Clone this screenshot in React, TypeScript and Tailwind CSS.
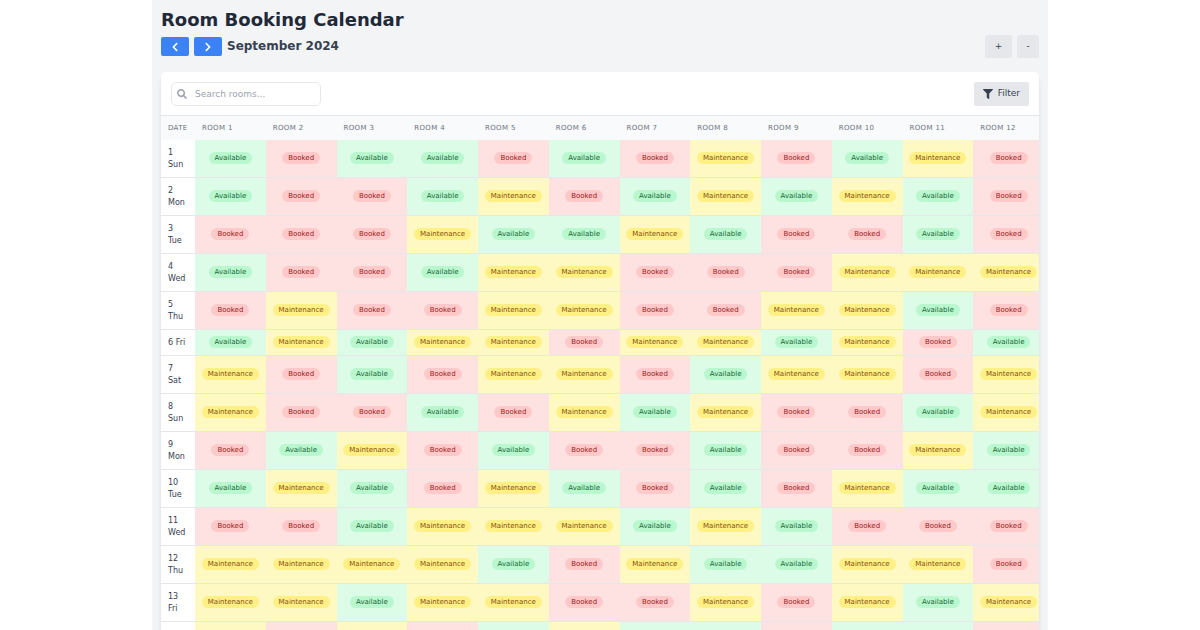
import { FaChevronLeft, FaChevronRight, FaFilter, FaSearch } from "react-icons/fa";
import clsx from "clsx";

type Status = "Available" | "Booked" | "Maintenance";

const STATUS: Record<string, Status> = { A: "Available", B: "Booked", M: "Maintenance" };

const cellStyles: Record<Status, string> = {
  Available: "bg-[#dcfce7]",
  Booked: "bg-[#fee2e2]",
  Maintenance: "bg-[#fef9c3]",
};

const badgeStyles: Record<Status, string> = {
  Available: "bg-green-200 text-[#166534]",
  Booked: "bg-red-200 text-[#991b1b]",
  Maintenance: "bg-yellow-200 text-[#854d0e]",
};

const rooms = Array.from({ length: 12 }, (_, i) => `Room ${i + 1}`);

// one letter per room, in room order
const days = [
  { date: "1 Sun", slots: "ABAABABMBAMB" },
  { date: "2 Mon", slots: "ABBAMBAMAMAB" },
  { date: "3 Tue", slots: "BBBMAAMABBAB" },
  { date: "4 Wed", slots: "ABBAMMBBBMMM" },
  { date: "5 Thu", slots: "BMBBMMBBMMAB" },
  { date: "6 Fri", slots: "AMAMMBMMAMBA" },
  { date: "7 Sat", slots: "MBABMMBAMMBM" },
  { date: "8 Sun", slots: "MBBABMAMBBAM" },
  { date: "9 Mon", slots: "BAMBABBABBMA" },
  { date: "10 Tue", slots: "AMABMABABMAA" },
  { date: "11 Wed", slots: "BBAMMMAMABBB" },
  { date: "12 Thu", slots: "MMMMABMAAMMB" },
  { date: "13 Fri", slots: "MMAMMBBMBMAM" },
  { date: "14 Sat", slots: "MBMBAMAABAAB" },
];

function StatusCell({ status }: { status: Status }) {
  return (
    <td className={clsx("text-center align-middle text-[7px] leading-3 whitespace-nowrap", cellStyles[status])}>
      <span className={clsx("inline-block rounded-full px-1.5 align-top", badgeStyles[status])}>{status}</span>
    </td>
  );
}

function Header() {
  return (
    <header className="mb-3.5">
      <h1 className="text-[18px] leading-[21px] font-bold text-[#1f2937]">Room Booking Calendar</h1>
      <div className="mt-[5px] flex items-center justify-between">
        <div className="flex items-center gap-[5px]">
          <button type="button" aria-label="Previous month" className="flex h-[19px] w-7 items-center justify-center rounded-xs bg-[#3b82f6] text-white">
            <FaChevronLeft size={10} />
          </button>
          <button type="button" aria-label="Next month" className="flex h-[19px] w-7 items-center justify-center rounded-xs bg-[#3b82f6] text-white">
            <FaChevronRight size={10} />
          </button>
          <h2 className="pb-0.5 text-[12px] leading-4 font-semibold text-[#374151]">September 2024</h2>
        </div>
        <div className="flex gap-[5px] text-[9px] text-[#374151]">
          <button type="button" className="h-[23px] w-[27px] rounded-xs bg-[#e5e7eb]">
            +
          </button>
          <button type="button" className="h-[23px] w-[22px] rounded-xs bg-[#e5e7eb]">
            -
          </button>
        </div>
      </div>
    </header>
  );
}

function Toolbar() {
  return (
    <div className="flex items-center justify-between px-2.5 pt-2.5 pb-[9px]">
      <div className="relative">
        <FaSearch size={10} className="absolute top-[7px] left-1.5 text-[#9ca3af]" />
        <input
          type="text"
          aria-label="Search rooms"
          placeholder="Search rooms..."
          className="block h-6 w-[150px] rounded-[5px] border border-[#e5e7eb] pr-2 pl-[23px] text-[9px] text-[#374151] placeholder:text-[#9ca3af]"
        />
      </div>
      <button type="button" className="flex h-6 items-center gap-[5px] rounded-xs bg-[#e5e7eb] px-[9px] text-[9px] text-[#374151]">
        <FaFilter size={10} />
        Filter
      </button>
    </div>
  );
}

export default function App() {
  return (
    <div className="mx-auto min-h-screen max-w-4xl bg-[#f3f4f6] p-[9px] font-['DejaVu_Sans',sans-serif]">
      <Header />
      <main className="overflow-hidden rounded-[5px] bg-white shadow-[0_6px_9px_-2px_rgba(0,0,0,0.1),0_2px_4px_-2px_rgba(0,0,0,0.1)]">
        <Toolbar />
        <div className="overflow-x-auto">
          <table className="w-full min-w-[883px] table-fixed border-collapse">
            <thead className="bg-[#f9fafb] text-left text-[7px] leading-[9px] tracking-wider text-[#6b7280] uppercase">
              <tr className="h-6 border-t border-[#e5e7eb]">
                <th className="w-[34px] px-[7px] pt-px font-medium">Date</th>
                {rooms.map((room) => (
                  <th key={room} className="px-[7px] pt-px font-medium">
                    {room}
                  </th>
                ))}
              </tr>
            </thead>
            <tbody>
              {days.map((day) => (
                <tr key={day.date} className="border-b border-[#e5e7eb]">
                  <th scope="row" className="px-[7px] pt-[7px] pb-1.5 text-left text-[8px] leading-3 font-normal text-[#374151]">
                    {day.date}
                  </th>
                  {day.slots.split("").map((slot, i) => (
                    <StatusCell key={rooms[i]} status={STATUS[slot]} />
                  ))}
                </tr>
              ))}
            </tbody>
          </table>
        </div>
      </main>
    </div>
  );
}
